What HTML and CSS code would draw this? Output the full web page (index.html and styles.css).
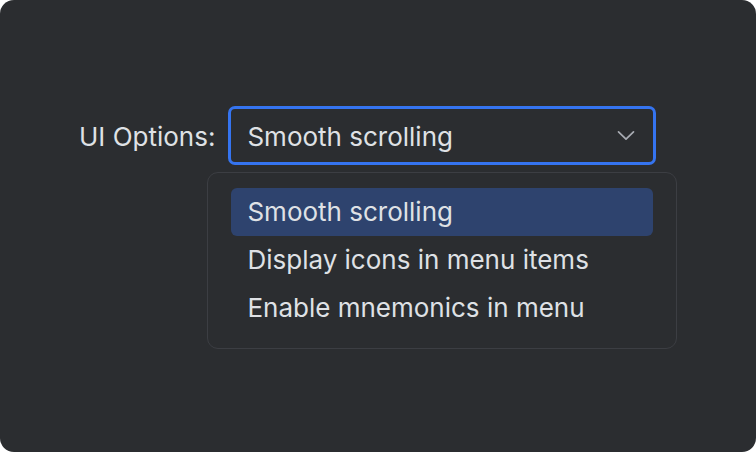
FILE: index.html
```html
<!DOCTYPE html>
<html>
<head>
<meta charset="utf-8">
<link rel="stylesheet" href="styles.css">
</head>
<body>
<div class="panel">
  <div class="row">
    <span class="label">UI Options:</span>
    <div class="combo-wrap">
      <div class="combo">
        <span class="combo-text">Smooth scrolling</span>
        <svg class="chevron" width="18" height="11" viewBox="0 0 18 11"><path d="M1.5 1.8 L9 9.2 L16.5 1.8" fill="none" stroke="#a8abb2" stroke-width="1.7" stroke-linecap="round" stroke-linejoin="round"/></svg>
      </div>
      <div class="popup">
        <div class="item selected">Smooth scrolling</div>
        <div class="item">Display icons in menu items</div>
        <div class="item">Enable mnemonics in menu</div>
      </div>
    </div>
  </div>
</div>
</body>
</html>
```
FILE: styles.css
```css
html, body {
  margin: 0;
  padding: 0;
  background: #ffffff;
}
.panel {
  width: 756px;
  height: 452px;
  background: #2b2d30;
  border-radius: 14px;
  font-family: Inter, "Noto Sans", sans-serif;
  color: #dfe1e5;
  box-sizing: border-box;
  padding-top: 106px;
  padding-left: 79px;
}
.row {
  display: flex;
  align-items: flex-start;
}
.label {
  font-size: 26px;
  line-height: 59px;
  padding-top: 1px;
  margin-right: 13px;
}
.combo-wrap {
  position: relative;
  width: 428px;
  flex: none;
}
.combo {
  height: 59px;
  box-sizing: border-box;
  border: 3px solid #3574f0;
  border-radius: 7px;
  display: flex;
  align-items: center;
  padding-left: 16px;
  padding-right: 18px;
}
.combo-text {
  font-size: 26px;
  padding-top: 2px;
  flex: 1;
}
.chevron {
  display: block;
}
.popup {
  position: absolute;
  left: -21px;
  top: 66px;
  width: 470px;
  box-sizing: border-box;
  border: 1px solid #3c3e43;
  border-radius: 11px;
  background: #2b2d30;
  padding: 15px 23px 16px 23px;
}
.item {
  height: 48px;
  line-height: 48px;
  font-size: 26px;
  padding-left: 16px;
  border-radius: 6px;
}
.item.selected {
  background: #2e436e;
}
```
